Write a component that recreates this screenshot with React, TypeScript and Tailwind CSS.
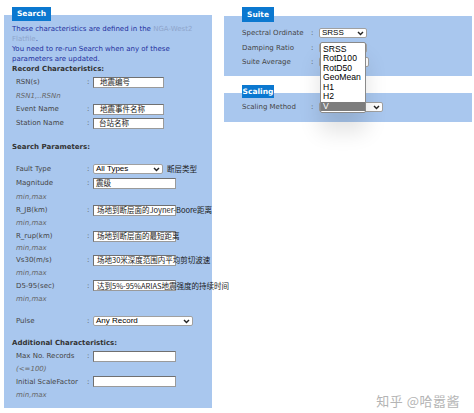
import React from "react";

const FONT = { fontFamily: '"DejaVu Sans", Verdana, sans-serif' };
const ARIAL = { fontFamily: '"Liberation Sans", Arial, "Noto Sans CJK SC", sans-serif' };
const CJK = { fontFamily: '"Noto Sans CJK SC", "DejaVu Sans", sans-serif' };

function Chevron() {
  return (
    <svg width="7" height="5" viewBox="0 0 7 5" className="shrink-0">
      <polyline points="1,1 3.5,3.6 6,1" fill="none" stroke="#222" strokeWidth="1.4" />
    </svg>
  );
}

function Row({
  label,
  height,
  children,
}: {
  label: string;
  height: string;
  children?: React.ReactNode;
}) {
  return (
    <div className={`flex items-center ${height}`}>
      <div className="w-[75px] shrink-0 pl-[4px] whitespace-nowrap text-[#454545]">{label}</div>
      <div className="w-[6px] shrink-0 text-[#454545]">:</div>
      {children}
    </div>
  );
}

function Hint({ text, height }: { text: string; height: string }) {
  return (
    <div className={`flex items-center pl-[4px] italic text-[#666] ${height}`}>{text}</div>
  );
}

function TextBox({ width, value, indent }: { width: string; value?: string; indent?: string }) {
  return (
    <div
      className={`relative h-[11px] shrink-0 ${width} bg-white border border-[#9a9a9a] border-t-[#707070] border-l-[#707070] flex items-center`}
    >
      {value ? (
        <span
          style={CJK}
          className={`absolute ${indent ?? "left-[2px]"} top-1/2 -translate-y-1/2 whitespace-nowrap text-[7.5px] leading-none text-[#1a1a1a]`}
        >
          {value}
        </span>
      ) : null}
    </div>
  );
}

function Select({ width, value }: { width: string; value: string }) {
  return (
    <div
      style={ARIAL}
      className={`h-[10px] shrink-0 ${width} bg-white border border-[#a0a0a0] rounded-[2px] flex items-center justify-between pl-[2px] pr-[2px] text-[8px] leading-none text-black`}
    >
      <span className="whitespace-nowrap">{value}</span>
      <Chevron />
    </div>
  );
}

function Tab({ text, className }: { text: string; className: string }) {
  return (
    <div
      className={`relative z-10 bg-[#0b78d0] text-white font-bold text-[7.5px] flex items-center justify-center ${className}`}
    >
      {text}
    </div>
  );
}

function SearchPanel() {
  return (
    <div className="ml-[4px] mt-[7px] w-[208px] shrink-0">
      <Tab text="Search" className="ml-[8px] w-[39px] h-[14px]" />
      <div className="-mt-[6px] h-[393px] bg-[#a9c7ee] pt-[9px] pl-[8px] text-[7px] leading-[10px]">
        <div className="text-[#1f2f9e] whitespace-nowrap">
          <div>
            These characteristics are defined in the <span className="text-[#8fa5cb]">NGA-West2</span>
          </div>
          <div>
            <span className="text-[#8fa5cb]">Flatfile</span>.
          </div>
          <div>You need to re-run Search when any of these</div>
          <div>parameters are updated.</div>
        </div>
        <div className="font-bold text-[#333]">Record Characteristics:</div>
        <div className="h-[1px]" />
        <Row label="RSN(s)" height="h-[14px]">
          <TextBox width="w-[71px]" value="地震编号" indent="left-[6px]" />
        </Row>
        <Hint text="RSN1,..RSNn" height="h-[13px]" />
        <Row label="Event Name" height="h-[14px]">
          <TextBox width="w-[71px]" value="地震事件名称" indent="left-[6px]" />
        </Row>
        <Row label="Station Name" height="h-[14px]">
          <TextBox width="w-[71px]" value="台站名称" indent="left-[5px]" />
        </Row>
        <div className="h-[12px]" />
        <div className="h-[10px] font-bold text-[#333] flex items-center">Search Parameters:</div>
        <div className="h-[10px]" />
        <Row label="Fault Type" height="h-[14px]">
          <Select width="w-[70px]" value="All Types" />
          <span style={CJK} className="ml-[4px] whitespace-nowrap text-[7.5px] text-[#1a1a1a]">
            断层类型
          </span>
        </Row>
        <Row label="Magnitude" height="h-[14px]">
          <TextBox width="w-[83px]" value="震级" />
        </Row>
        <Hint text="min,max" height="h-[13px]" />
        <Row label="R_JB(km)" height="h-[14px]">
          <TextBox width="w-[83px]" value="场地到断层面的Joyner-Boore距离" indent="left-[3px]" />
        </Row>
        <Hint text="min,max" height="h-[12px]" />
        <Row label="R_rup(km)" height="h-[14px]">
          <TextBox width="w-[83px]" value="场地到断层面的最短距离" indent="left-[3px]" />
        </Row>
        <Hint text="min,max" height="h-[10px]" />
        <Row label="Vs30(m/s)" height="h-[14px]">
          <TextBox width="w-[83px]" value="场地30米深度范围内平均剪切波速" indent="left-[3px]" />
        </Row>
        <Hint text="min,max" height="h-[12px]" />
        <Row label="D5-95(sec)" height="h-[13px]">
          <TextBox width="w-[83px]" value="达到5%-95%ARIAS地震强度的持续时间" indent="left-[3px]" />
        </Row>
        <Hint text="min,max" height="h-[13px]" />
        <div className="h-[9px]" />
        <Row label="Pulse" height="h-[14px]">
          <Select width="w-[100px]" value="Any Record" />
        </Row>
        <div className="h-[10px]" />
        <div className="h-[10px] font-bold text-[#333] flex items-center">Additional Characteristics:</div>
        <div className="h-[1px]" />
        <Row label="Max No. Records" height="h-[14px]">
          <TextBox width="w-[83px]" />
        </Row>
        <Hint text="(<=100)" height="h-[12px]" />
        <Row label="Initial ScaleFactor" height="h-[13px]">
          <TextBox width="w-[83px]" />
        </Row>
        <Hint text="min,max" height="h-[14px]" />
      </div>
    </div>
  );
}

function RightRow({ label, children }: { label: string; children?: React.ReactNode }) {
  return (
    <div className="flex items-center h-[14.5px]">
      <div className="w-[69px] shrink-0 whitespace-nowrap text-[#454545]">{label}</div>
      <div className="w-[8px] shrink-0 text-[#454545]">:</div>
      {children}
    </div>
  );
}

function Dropdown() {
  const items = ["SRSS", "RotD100", "RotD50", "GeoMean", "H1", "H2", "V"];
  return (
    <div
      style={ARIAL}
      className="absolute left-[96px] top-[35px] z-20 w-[46px] bg-white border border-[#8a8a8a] rounded-[2px] py-[1px] shadow-[0_18px_22px_rgba(0,0,0,0.12)] text-[8.6px] leading-none text-black"
    >
      {items.map((it) => (
        <div
          key={it}
          className={`h-[9.6px] flex items-center pl-[2px] ${it === "V" ? "bg-[#7d7d7d] text-white" : ""}`}
        >
          {it}
        </div>
      ))}
    </div>
  );
}

function RightPanels() {
  return (
    <div className="relative ml-[12px] mt-[7px] w-[248px] shrink-0 text-[7px] leading-[10px]">
      <Tab text="Suite" className="ml-[18px] w-[32px] h-[15px]" />
      <div className="-mt-[6px] h-[60px] bg-[#a9c7ee] pt-[10px] pl-[18px]">
        <RightRow label="Spectral Ordinate">
          <Select width="w-[48px]" value="SRSS" />
        </RightRow>
        <RightRow label="Damping Ratio">
          <Select width="w-[48px]" value="" />
        </RightRow>
        <RightRow label="Suite Average">
          <Select width="w-[50px]" value="" />
        </RightRow>
      </div>
      <Tab text="Scaling" className="mt-[9px] ml-[18px] w-[32px] h-[13px]" />
      <div className="-mt-[5px] h-[29px] bg-[#a9c7ee] pt-[7px] pl-[18px]">
        <RightRow label="Scaling Method">
          <Select width="w-[64px]" value="" />
        </RightRow>
      </div>
      <Dropdown />
    </div>
  );
}

export default function App() {
  return (
    <div style={FONT} className="relative w-[474px] h-[413px] bg-white flex overflow-hidden">
      <SearchPanel />
      <RightPanels />
      <div
        style={CJK}
        className="absolute right-[14px] bottom-[6px] text-[13px] leading-none text-[#b4b4b4] tracking-[0.5px]"
      >
        知乎 @哈嚣酱
      </div>
    </div>
  );
}
